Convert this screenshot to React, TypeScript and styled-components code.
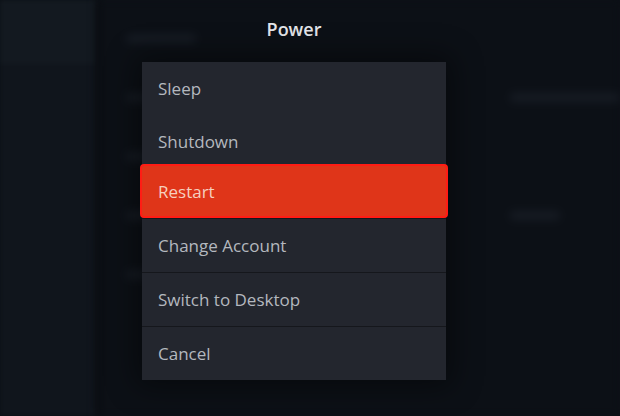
import React from "react";
import styled, { createGlobalStyle } from "styled-components";

const GlobalStyle = createGlobalStyle`
  html, body {
    margin: 0;
    padding: 0;
    background: #0c1016;
  }
  * { box-sizing: border-box; }
`;

const Screen = styled.div`
  position: relative;
  width: 620px;
  height: 416px;
  overflow: hidden;
  display: flex;
  font-family: "Open Sans", "Noto Sans", sans-serif;
`;

const Sidebar = styled.div`
  width: 96px;
  background: #10151c;
  display: flex;
  flex-direction: column;
  filter: blur(2px);

  .top {
    height: 64px;
    background: #131920;
  }
`;

const Main = styled.div`
  flex: 1;
  display: flex;
  flex-direction: column;
  padding: 34px 0 0 24px;
  gap: 50px;
  background: #0c1016;
  filter: blur(4px);
  border-left: 6px solid #0a0d12;
`;

const GhostRow = styled.div<{ $right?: number }>`
  display: flex;
  justify-content: space-between;
  align-items: center;
  padding-right: ${(p) => p.$right ?? 0}px;
`;

const Ghost = styled.span<{ $w: number }>`
  display: block;
  width: ${(p) => p.$w}px;
  height: 9px;
  border-radius: 4px;
  background: #161b23;
`;

const Overlay = styled.div`
  position: absolute;
  inset: 0;
  display: flex;
  flex-direction: column;
  align-items: center;
  padding: 17px 32px 0 0;
`;

const Title = styled.h1`
  margin: 0 0 21px;
  font-size: 18px;
  line-height: 24px;
  font-weight: 600;
  color: #e4e6ea;
`;

const Menu = styled.div`
  width: 304px;
  display: flex;
  flex-direction: column;
  background: #23262e;
  box-shadow: 0 0 28px 6px rgba(0, 0, 0, 0.45);
`;

const Item = styled.div<{ $active?: boolean }>`
  display: flex;
  align-items: center;
  height: ${(p) => (p.$active ? 54 : 53)}px;
  padding-left: 16px;
  margin: ${(p) => (p.$active ? "-4px -2px 0" : "0")};
  font-size: 17px;
  font-weight: 500;
  color: ${(p) => (p.$active ? "#f6cfbf" : "#b4b8bf")};
  background: ${(p) => (p.$active ? "#df3519" : "transparent")};
  border: ${(p) => (p.$active ? "2px solid #ff1c14" : "none")};
  border-radius: ${(p) => (p.$active ? "4px" : "0")};
`;

const Divider = styled.div`
  height: 1px;
  background: #15171c;
`;

const items = [
  { label: "Sleep" },
  { label: "Shutdown" },
  { label: "Restart", active: true, divider: true },
  { label: "Change Account", divider: true },
  { label: "Switch to Desktop", divider: true },
  { label: "Cancel" },
];

export default function App() {
  return (
    <>
      <GlobalStyle />
      <Screen>
        <Sidebar>
          <div className="top" />
        </Sidebar>
        <Main>
          <GhostRow>
            <Ghost $w={70} />
          </GhostRow>
          <GhostRow>
            <Ghost $w={40} />
            <Ghost $w={110} />
          </GhostRow>
          <GhostRow>
            <Ghost $w={30} />
          </GhostRow>
          <GhostRow $right={60}>
            <Ghost $w={30} />
            <Ghost $w={50} />
          </GhostRow>
          <GhostRow>
            <Ghost $w={30} />
          </GhostRow>
        </Main>
        <Overlay>
          <Title>Power</Title>
          <Menu>
            {items.map((it) => (
              <React.Fragment key={it.label}>
                <Item $active={it.active}>{it.label}</Item>
                {it.divider && <Divider />}
              </React.Fragment>
            ))}
          </Menu>
        </Overlay>
      </Screen>
    </>
  );
}
